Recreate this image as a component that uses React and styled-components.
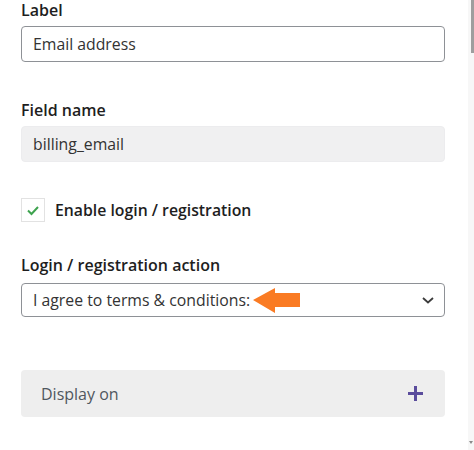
import styled, { createGlobalStyle } from 'styled-components';

const GlobalStyle = createGlobalStyle`
  html, body {
    margin: 0;
    padding: 0;
    background: #ffffff;
    overflow: hidden;
  }

  body {
    font-family: 'Open Sans', 'Noto Sans', sans-serif;
    color: #1e1e1e;
  }
`;

const App = () => {
  return (
    <>
      <GlobalStyle />
      <Page>
        <Panel>
          <Field $after={38}>
            <FieldLabel>Label</FieldLabel>
            <TextInput defaultValue='Email address' />
          </Field>

          <Field $after={36}>
            <FieldLabel>Field name</FieldLabel>
            <TextInput $readOnly readOnly defaultValue='billing_email' />
          </Field>

          <CheckRow>
            <CheckBox>
              <svg width='14' height='11' viewBox='0 0 14 11' fill='none'>
                <polyline points='2,5.5 5.5,9 12,2' stroke='#3ea34f' strokeWidth='2' />
              </svg>
            </CheckBox>
            <CheckText>Enable login / registration</CheckText>
          </CheckRow>

          <Field $after={53} $gap={8}>
            <FieldLabel>Login / registration action</FieldLabel>
            <SelectBox>
              <SelectValue>I agree to terms &amp; conditions:</SelectValue>
              <Pointer width='48' height='25' viewBox='0 0 48 25'>
                <polygon points='0,12 22,0 22,5 47,5 47,19 22,19 22,25' fill='#fa7b23' />
              </Pointer>
              <Chevron width='12' height='7' viewBox='0 0 12 7' fill='none'>
                <polyline points='1,1 6,5.5 11,1' stroke='#3c3c3c' strokeWidth='1.8' />
              </Chevron>
            </SelectBox>
          </Field>

          <Accordion>
            <AccordionTitle>Display on</AccordionTitle>
            <svg width='15' height='15' viewBox='0 0 15 15'>
              <rect x='6' y='0' width='3' height='15' fill='#5a4c9c' />
              <rect x='0' y='6' width='15' height='3' fill='#5a4c9c' />
            </svg>
          </Accordion>
        </Panel>

        <ScrollTrack>
          <ScrollThumb />
          <ScrollArrow />
        </ScrollTrack>
      </Page>
    </>
  );
};

export default App;

const Page = styled.div`
  display: flex;
  width: 474px;
  height: 450px;
`;

const Panel = styled.div`
  flex: 1;
  display: flex;
  flex-direction: column;
  padding: 0 23px 0 21px;
`;

const Field = styled.div`
  display: flex;
  flex-direction: column;
  gap: ${(props) => props.$gap || 6}px;
  margin-bottom: ${(props) => props.$after}px;
`;

const FieldLabel = styled.div`
  font-size: 16px;
  line-height: 20px;
  font-weight: 600;
  color: #1e1e1e;
`;

const TextInput = styled.input`
  box-sizing: border-box;
  width: 100%;
  height: 36px;
  padding: 0 11px;
  border: 1px solid ${(props) => (props.$readOnly ? '#ececee' : '#8e9196')};
  border-radius: 4px;
  background: ${(props) => (props.$readOnly ? '#f0f0f1' : '#ffffff')};
  font-family: inherit;
  font-size: 15.8px;
  color: #333333;
  outline: none;
`;

const CheckRow = styled.div`
  display: flex;
  align-items: center;
  gap: 10px;
  margin-bottom: 33px;
`;

const CheckBox = styled.div`
  box-sizing: border-box;
  width: 24px;
  height: 24px;
  display: flex;
  align-items: center;
  justify-content: center;
  border: 1px solid #e2e2e2;
  background: #ffffff;
`;

const CheckText = styled.span`
  font-size: 15.8px;
  font-weight: 600;
  color: #1e1e1e;
`;

const SelectBox = styled.div`
  box-sizing: border-box;
  height: 34px;
  display: flex;
  align-items: center;
  padding: 0 10px 0 11px;
  border: 1px solid #8e9196;
  border-radius: 4px;
  background: #ffffff;
`;

const SelectValue = styled.span`
  font-size: 15.8px;
  color: #333333;
  white-space: nowrap;
`;

const Pointer = styled.svg`
  flex-shrink: 0;
  margin-left: 3px;
`;

const Chevron = styled.svg`
  margin-left: auto;
`;

const Accordion = styled.div`
  height: 47px;
  display: flex;
  align-items: center;
  justify-content: space-between;
  padding: 0 22px 0 20px;
  border-radius: 4px;
  background: #eeeeee;
`;

const AccordionTitle = styled.span`
  font-size: 16px;
  color: #50575e;
`;

const ScrollTrack = styled.div`
  width: 6px;
  display: flex;
  flex-direction: column;
  align-items: flex-end;
  background: #f7f7f7;
`;

const ScrollThumb = styled.div`
  width: 3px;
  height: 53px;
  background: #9e9e9e;
`;

const ScrollArrow = styled.div`
  width: 0;
  height: 0;
  margin-top: auto;
  margin-bottom: 6px;
  margin-right: 1px;
  border-left: 2px solid transparent;
  border-right: 2px solid transparent;
  border-top: 3px solid #8a8a8a;
`;
